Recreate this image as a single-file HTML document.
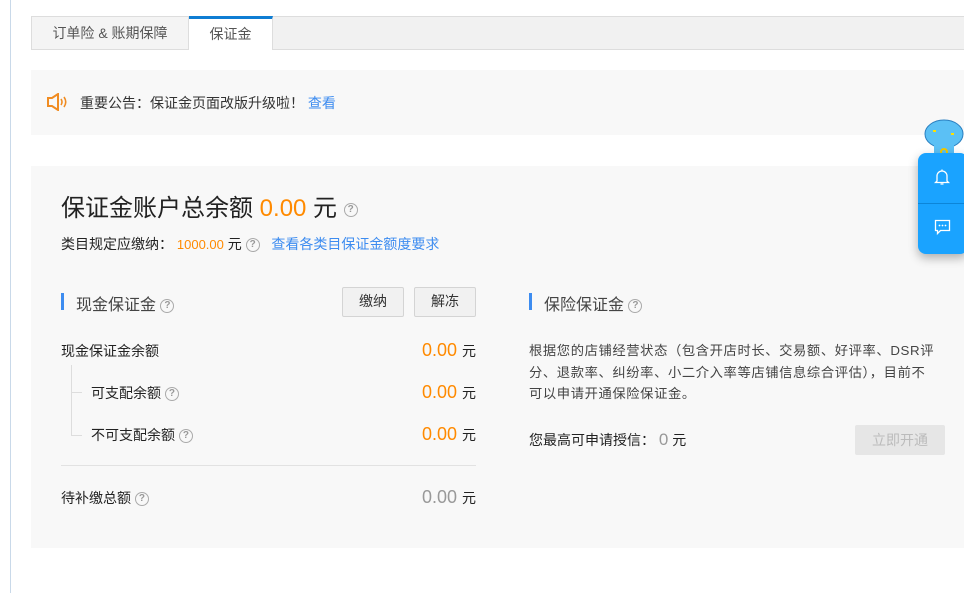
<!DOCTYPE html>
<html><head><meta charset="utf-8"><style>
*{margin:0;padding:0;box-sizing:border-box}
body{width:964px;height:593px;background:#fff;position:relative;overflow:hidden;font-family:"Liberation Sans","Noto Sans CJK SC",sans-serif;color:#333;font-size:14px}
.a{position:absolute;white-space:nowrap}
.q{display:inline-block;width:14px;height:14px;border:1.3px solid #aaa;border-radius:50%;font-size:10px;line-height:12px;text-align:center;color:#999;vertical-align:middle;font-weight:bold}
.or{color:#ff8a00}
.btn{position:absolute;border:1px solid #d4d4d4;background:#f1f1f1;border-radius:2px;text-align:center;font-size:14px;line-height:27px;color:#333}
</style></head><body>
<div class="a" style="left:10px;top:0;width:1px;height:593px;background:#c9d9e9"></div>
<div class="a" style="left:31px;top:16px;width:933px;height:34px;background:#f1f1f1;border-top:1px solid #ddd;border-bottom:1px solid #ddd"></div>
<div class="a" style="left:31px;top:16px;width:158px;height:34px;background:#f4f4f4;border:1px solid #ddd;text-align:center;line-height:32px;font-size:14px;color:#555">订单险 &amp; 账期保障</div>
<div class="a" style="left:189px;top:16px;width:84px;height:34px;background:#fff;border-top:3px solid #0e7dd3;border-right:1px solid #ddd;text-align:center;line-height:30px;font-size:14px;color:#555">保证金</div>

<div class="a" style="left:31px;top:70px;width:933px;height:65px;background:#f8f8f8"></div>
<svg class="a" style="left:46px;top:93px" width="24" height="18" viewBox="0 0 24 18"><path d="M2 5h4l6-4v16l-6-4H2z" fill="none" stroke="#f08c22" stroke-width="2"/><path d="M15 6q2 3 0 6M18 4q3.5 5 0 10" fill="none" stroke="#f08c22" stroke-width="1.6"/></svg>
<div class="a" style="left:80px;top:93px;font-size:14px;color:#333">重要公告：保证金页面改版升级啦！ <span style="color:#3d8cf0">查看</span></div>

<div class="a" style="left:31px;top:166px;width:933px;height:382px;background:#f8f8f8"></div>
<div class="a" style="left:61px;top:193px;font-size:24px;color:#222;line-height:32px">保证金账户总余额 <span class="or">0.00</span> 元 <span class="q">?</span></div>
<div class="a" style="left:61px;top:234px;font-size:14px;color:#222">类目规定应缴纳： <span class="or" style="font-size:13px">1000.00</span> 元 <span class="q">?</span> &nbsp; <span style="color:#3d8cf0">查看各类目保证金额度要求</span></div>

<div class="a" style="left:61px;top:293px;width:3px;height:17px;background:#3d8cf0"></div>
<div class="a" style="left:76px;top:291px;font-size:16px;color:#444">现金保证金 <span class="q">?</span></div>
<div class="btn" style="left:342px;top:287px;width:62px;height:30px">缴纳</div>
<div class="btn" style="left:414px;top:287px;width:62px;height:30px">解冻</div>

<div class="a" style="left:61px;top:341px;color:#222">现金保证金余额</div>
<div class="a" style="right:488px;top:340px;font-size:18px"><span class="or">0.00</span> <span style="font-size:14px;color:#222">元</span></div>
<div class="a" style="left:71px;top:365px;width:1px;height:71px;background:#ddd"></div>
<div class="a" style="left:71px;top:392px;width:11px;height:1px;background:#ddd"></div>
<div class="a" style="left:71px;top:435px;width:11px;height:1px;background:#ddd"></div>
<div class="a" style="left:91px;top:383px;color:#222">可支配余额 <span class="q">?</span></div>
<div class="a" style="right:488px;top:382px;font-size:18px"><span class="or">0.00</span> <span style="font-size:14px;color:#222">元</span></div>
<div class="a" style="left:91px;top:425px;color:#222">不可支配余额 <span class="q">?</span></div>
<div class="a" style="right:488px;top:424px;font-size:18px"><span class="or">0.00</span> <span style="font-size:14px;color:#222">元</span></div>
<div class="a" style="left:61px;top:465px;width:415px;height:1px;background:#e2e2e2"></div>
<div class="a" style="left:61px;top:488px;color:#222">待补缴总额 <span class="q">?</span></div>
<div class="a" style="right:488px;top:487px;font-size:18px"><span style="color:#999">0.00</span> <span style="font-size:14px;color:#222">元</span></div>

<div class="a" style="left:529px;top:293px;width:3px;height:17px;background:#3d8cf0"></div>
<div class="a" style="left:544px;top:291px;font-size:16px;color:#444">保险保证金 <span class="q">?</span></div>
<div class="a" style="left:529px;top:340px;line-height:21.5px;color:#444;font-size:13.3px;letter-spacing:0.6px">根据您的店铺经营状态（包含开店时长、交易额、好评率、DSR评<br>分、退款率、纠纷率、小二介入率等店铺信息综合评估），目前不<br>可以申请开通保险保证金。</div>
<div class="a" style="left:529px;top:430px;color:#222">您最高可申请授信： <span style="font-size:17px;color:#999">0</span> 元</div>
<div class="a" style="left:855px;top:425px;width:90px;height:30px;background:#e6e6e6;border-radius:2px;text-align:center;line-height:30px;font-size:14px;color:#bbb">立即开通</div>

<svg class="a" style="left:918px;top:117px" width="46" height="40" viewBox="0 0 46 40"><ellipse cx="26" cy="17" rx="19" ry="14" fill="#5bc0f5" stroke="#2a7fc0" stroke-width="1"/><rect x="16" y="28" width="20" height="12" fill="#5bc0f5"/><circle cx="26" cy="35" r="3" fill="none" stroke="#f2c900" stroke-width="2"/><rect x="15" y="13" width="3" height="2" fill="#ffe100"/><rect x="33" y="16" width="3" height="2" fill="#ffe100"/></svg>
<div class="a" style="left:918px;top:153px;width:50px;height:101px;background:#1aa3ff;border-radius:8px;box-shadow:0 4px 10px rgba(0,0,0,.3)"></div>
<div class="a" style="left:918px;top:203px;width:46px;height:1px;background:#0c85d8"></div>
<svg class="a" style="left:934px;top:168px" width="16" height="18" viewBox="0 0 16 18"><path d="M3 13V8a5 5 0 0 1 10 0v5l1.5 1.5h-13z M6.5 16h3" fill="none" stroke="#fff" stroke-width="1.3"/><path d="M8 1.5v1.5" stroke="#fff" stroke-width="1.3"/></svg>
<svg class="a" style="left:934px;top:219px" width="17" height="17" viewBox="0 0 17 17"><path d="M1.5 1.5h14v10h-9l-3 3v-3h-2z" fill="none" stroke="#fff" stroke-width="1.3"/><circle cx="5.5" cy="6.5" r=".9" fill="#fff"/><circle cx="8.5" cy="6.5" r=".9" fill="#fff"/><circle cx="11.5" cy="6.5" r=".9" fill="#fff"/></svg>
</body></html>
